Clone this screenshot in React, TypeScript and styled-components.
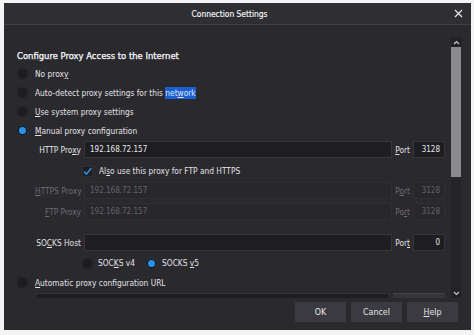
import styled, { createGlobalStyle } from 'styled-components';

const GlobalStyle = createGlobalStyle`
  html, body {
    margin: 0;
    padding: 0;
    background: #f4f4f5;
  }
  body {
    font-family: 'DejaVu Sans Condensed', 'DejaVu Sans', sans-serif;
  }
`;

export default function App() {
  return (
    <>
      <GlobalStyle />
      <Dialog>
        <TitleBar>
          <span />
          <Title>Connection Settings</Title>
          <CloseButton aria-label="Close">
            <svg width="9" height="9" viewBox="0 0 9 9">
              <path d="M1 1 L8 8 M8 1 L1 8" stroke="#e8e8ea" strokeWidth="1.2" />
            </svg>
          </CloseButton>
        </TitleBar>

        <Body>
          <ScrollArea>
            <Content>
              <Heading>Configure Proxy Access to the Internet</Heading>

              <RadioRow>
                <Radio />
                <Label>
                  No prox<Key>y</Key>
                </Label>
              </RadioRow>
              <RadioRow>
                <Radio />
                <Label>
                  Auto-detect proxy settings for this{' '}
                  <Selected>
                    net<Key>w</Key>ork
                  </Selected>
                </Label>
              </RadioRow>
              <RadioRow>
                <Radio />
                <Label>
                  <Key>U</Key>se system proxy settings
                </Label>
              </RadioRow>
              <RadioRow>
                <Radio $checked />
                <Label>
                  <Key>M</Key>anual proxy configuration
                </Label>
              </RadioRow>

              <Fields>
                <FieldRow $top={1}>
                  <FieldLabel>
                    HTTP Pro<Key>x</Key>y
                  </FieldLabel>
                  <TextInput defaultValue="192.168.72.157" />
                  <FieldLabel>
                    <Key>P</Key>ort
                  </FieldLabel>
                  <PortInput defaultValue="3128" />
                </FieldRow>

                <CheckRow>
                  <CheckBox>
                    <svg width="11" height="11" viewBox="0 0 11 11">
                      <path d="M2 5.6 L4.4 8.2 L9.2 2.2" fill="none" stroke="#2e95ec" strokeWidth="1.5" />
                    </svg>
                  </CheckBox>
                  <Label>
                    Al<Key>s</Key>o use this proxy for FTP and HTTPS
                  </Label>
                </CheckRow>

                <FieldRow $top={2}>
                  <FieldLabel $disabled>
                    <Key>H</Key>TTPS Proxy
                  </FieldLabel>
                  <TextInput disabled defaultValue="192.168.72.157" />
                  <FieldLabel $disabled>
                    P<Key>o</Key>rt
                  </FieldLabel>
                  <PortInput disabled defaultValue="3128" />
                </FieldRow>

                <FieldRow $top={4}>
                  <FieldLabel $disabled>
                    <Key>F</Key>TP Proxy
                  </FieldLabel>
                  <TextInput disabled defaultValue="192.168.72.157" />
                  <FieldLabel $disabled>
                    Po<Key>r</Key>t
                  </FieldLabel>
                  <PortInput disabled defaultValue="3128" />
                </FieldRow>

                <FieldRow $top={14}>
                  <FieldLabel>
                    SO<Key>C</Key>KS Host
                  </FieldLabel>
                  <TextInput defaultValue="" />
                  <FieldLabel>
                    Por<Key>t</Key>
                  </FieldLabel>
                  <PortInput defaultValue="0" />
                </FieldRow>

                <VersionRow>
                  <Radio />
                  <Label>
                    SOC<Key>K</Key>S v4
                  </Label>
                  <Radio $checked $gap={6} />
                  <Label>
                    SOCKS <Key>v</Key>5
                  </Label>
                </VersionRow>
              </Fields>

              <RadioRow $top={1}>
                <Radio />
                <Label>
                  <Key>A</Key>utomatic proxy configuration URL
                </Label>
              </RadioRow>

              <UrlRow>
                <TextInput defaultValue="" />
                <ReloadButton />
              </UrlRow>
            </Content>

            <Scrollbar>
              <ScrollArrow>
                <svg width="7" height="5" viewBox="0 0 7 5">
                  <path d="M1 4 L3.5 1.5 L6 4" fill="none" stroke="#c9c9cc" strokeWidth="1.2" />
                </svg>
              </ScrollArrow>
              <Thumb />
              <Track />
              <ScrollArrow>
                <svg width="7" height="5" viewBox="0 0 7 5">
                  <path d="M1 1 L3.5 3.5 L6 1" fill="none" stroke="#c9c9cc" strokeWidth="1.2" />
                </svg>
              </ScrollArrow>
            </Scrollbar>
          </ScrollArea>

          <Footer>
            <Button>OK</Button>
            <Button>Cancel</Button>
            <Button>
              <Key>H</Key>elp
            </Button>
          </Footer>
        </Body>
      </Dialog>
    </>
  );
}

const Dialog = styled.div`
  margin: 3px 0 0 4px;
  width: 467px;
  height: 327px;
  display: flex;
  flex-direction: column;
  background: #2a292e;
  color: #e4e4e7;
  overflow: hidden;
`;

const TitleBar = styled.div`
  height: 21px;
  flex-shrink: 0;
  display: grid;
  grid-template-columns: 1fr auto 1fr;
  align-items: center;
  background: #2f2e33;
  border-bottom: 1px solid #424147;
`;

const Title = styled.div`
  margin-right: 16px;
  font-size: 8.4px;
  color: #f4f4f6;
  -webkit-text-stroke: 0.15px #f4f4f6;
`;

const CloseButton = styled.div`
  justify-self: end;
  width: 20px;
  height: 20px;
  display: flex;
  align-items: center;
  justify-content: center;
  margin-right: 3px;
`;

const Body = styled.div`
  flex: 1;
  display: flex;
  flex-direction: column;
  padding-top: 12px;
  min-height: 0;
`;

const ScrollArea = styled.div`
  flex: 1;
  display: flex;
  min-height: 0;
  overflow: hidden;
`;

const Content = styled.div`
  flex: 1;
  padding: 11px 6px 0 13px;
  overflow: hidden;
`;

const Heading = styled.div`
  font-size: 9.4px;
  line-height: 16px;
  color: #fbfbfe;
  -webkit-text-stroke: 0.25px #fbfbfe;
`;

const RadioRow = styled.div<{ $top?: number }>`
  height: 19px;
  margin-top: ${(p) => p.$top ?? 0}px;
  display: flex;
  align-items: center;
  gap: 7px;
`;

const Radio = styled.span<{ $checked?: boolean; $gap?: number }>`
  width: 11px;
  height: 11px;
  flex-shrink: 0;
  border-radius: 50%;
  margin-left: ${(p) => p.$gap ?? 0}px;
  background: ${(p) => (p.$checked ? '#2a92e9' : '#1d1c21')};
  box-shadow: ${(p) =>
    p.$checked ? 'inset 0 0 0 2px #1d1c21' : 'inset 0 0 0 1px #252429'};
`;

const Label = styled.span<{ $disabled?: boolean }>`
  font-size: 8.3px;
  line-height: 12px;
  white-space: nowrap;
  color: ${(p) => (p.$disabled ? '#6d6c72' : '#e2e2e5')};
`;

const Key = styled.span`
  text-decoration: underline;
  text-underline-offset: 1px;
`;

const Selected = styled.span`
  background: #1b5fd1;
  color: #dce7ff;
  padding: 1px 0;
`;

const Fields = styled.div`
  margin-left: 18px;
`;

const FieldRow = styled.div<{ $top: number }>`
  height: 17px;
  margin-top: ${(p) => p.$top}px;
  display: grid;
  grid-template-columns: 46px 1fr auto 32px;
  column-gap: 3px;
  align-items: center;
`;

const FieldLabel = styled.span<{ $disabled?: boolean }>`
  font-size: 8.3px;
  text-align: right;
  white-space: nowrap;
  color: ${(p) => (p.$disabled ? '#6d6c72' : '#e2e2e5')};
`;

const TextInput = styled.input`
  box-sizing: border-box;
  height: 17px;
  width: 100%;
  min-width: 0;
  padding: 0 5px;
  font-family: inherit;
  font-size: 8px;
  color: #e8e8eb;
  background: #1e1d22;
  border: 1px solid #36353b;
  border-radius: 0;
  outline: none;

  &:disabled {
    color: #646369;
    background: #28272c;
    border-color: #302f35;
  }
`;

const PortInput = styled(TextInput)`
  text-align: right;
  padding: 0 4px;
`;

const CheckRow = styled.div`
  height: 18px;
  margin-top: 4px;
  padding-left: 47px;
  display: flex;
  align-items: center;
  gap: 6px;
`;

const CheckBox = styled.span`
  width: 11px;
  height: 11px;
  display: flex;
  background: #1d1c21;
  box-shadow: inset 0 0 0 1px #2e2d33;
`;

const VersionRow = styled.div`
  height: 18px;
  margin-top: 3px;
  padding-left: 47px;
  display: flex;
  align-items: center;
  gap: 5px;
`;

const UrlRow = styled.div`
  height: 17px;
  margin: 1px 0 0 18px;
  display: grid;
  grid-template-columns: 1fr 52px;
  column-gap: 3px;
`;

const ReloadButton = styled.div`
  background: #36353a;
  border-top: 1px solid #44434a;
`;

const Scrollbar = styled.div`
  width: 10px;
  margin-right: 10px;
  display: flex;
  flex-direction: column;
  background: #252429;
`;

const ScrollArrow = styled.div`
  height: 10px;
  flex-shrink: 0;
  display: flex;
  align-items: center;
  justify-content: center;
  background: #222126;
`;

const Thumb = styled.div`
  height: 130px;
  background: #8b8a8f;
`;

const Track = styled.div`
  flex: 1;
`;

const Footer = styled.div`
  height: 32px;
  flex-shrink: 0;
  box-sizing: border-box;
  padding: 4px 13px 8px 0;
  display: flex;
  justify-content: flex-end;
  gap: 5px;
`;

const Button = styled.div`
  width: 51px;
  height: 20px;
  display: flex;
  align-items: center;
  justify-content: center;
  font-size: 8.8px;
  color: #e6e6e9;
  background: #3b3a40;
`;
